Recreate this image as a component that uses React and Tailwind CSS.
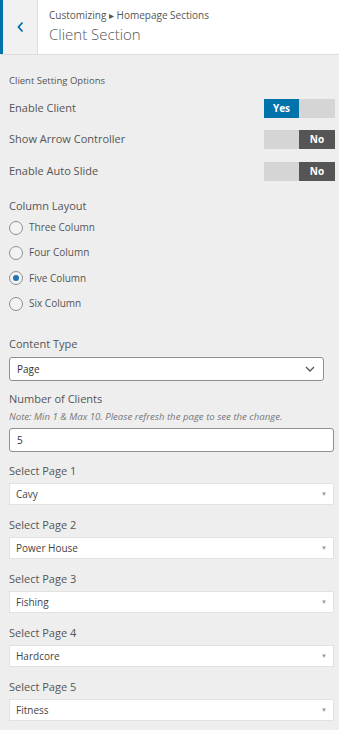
import React from "react";

const font = { fontFamily: '"Open Sans", "Noto Sans", sans-serif' };

function Toggle({ on }) {
  return (
    <div className="flex h-[19px] w-[71px] text-[10px] font-bold text-white">
      <div className={`flex w-[35px] items-center justify-center ${on ? "bg-[#0073aa]" : "bg-[#d5d5d5]"}`}>
        {on ? "Yes" : ""}
      </div>
      <div className={`flex w-[36px] items-center justify-center ${on ? "bg-[#d5d5d5]" : "bg-[#555555]"}`}>
        {on ? "" : "No"}
      </div>
    </div>
  );
}

function Radio({ label, checked }) {
  return (
    <div className="flex h-[25.3px] items-center gap-[6px]">
      <div className="flex h-[14px] w-[14px] items-center justify-center rounded-full border border-[#8c8f94] bg-[#f3f3f3]">
        {checked && <div className="h-[6px] w-[6px] rounded-full bg-[#2271b1]" />}
      </div>
      <span className="text-[10px] text-[#555]">{label}</span>
    </div>
  );
}

function PageSelect({ label, value }) {
  return (
    <div className="flex flex-col">
      <div className="h-[18px] text-[11px] leading-[18px] text-[#555]">{label}</div>
      <div className="mt-[3px] flex h-[22px] w-[325px] items-center justify-between border border-[#e2e2e2] bg-white pl-[6px] pr-[6px]">
        <span className="text-[10px] text-[#444]">{value}</span>
        <span className="text-[6px] text-[#999]">▼</span>
      </div>
    </div>
  );
}

export default function App() {
  return (
    <div className="min-h-[730px] w-[339px] bg-[#eeeeee]" style={font}>
      <div className="flex h-[55px] border-b border-[#dddddd] bg-white">
        <div className="flex w-[38px] items-center justify-center border-l-[3px] border-r border-l-[#0073aa] border-r-[#dddddd] bg-[#f1f1f1]">
          <svg width="9" height="12" viewBox="0 0 9 12" fill="none">
            <path d="M6.5 1.5 L2.5 6 L6.5 10.5" stroke="#0073aa" strokeWidth="1.8" />
          </svg>
        </div>
        <div className="flex flex-col pl-[11px] pt-[8px]">
          <div className="text-[10px] leading-[14px] text-[#555]">Customizing ▸ Homepage Sections</div>
          <div className="mt-[2px] text-[15px] font-light leading-[20px] text-[#555]">Client Section</div>
        </div>
      </div>

      <div className="flex flex-col px-[9px]">
        <div className="mt-[19px] text-[9.5px] leading-[14px] text-[#555]">Client Setting Options</div>

        <div className="mt-[11px] flex h-[19px] items-center justify-between">
          <span className="text-[11px] text-[#555]">Enable Client</span>
          <div className="-mr-[5px]"><Toggle on /></div>
        </div>
        <div className="mt-[12px] flex h-[19px] items-center justify-between">
          <span className="text-[11px] text-[#555]">Show Arrow Controller</span>
          <div className="-mr-[5px]"><Toggle on={false} /></div>
        </div>
        <div className="mt-[13px] flex h-[19px] items-center justify-between">
          <span className="text-[11px] text-[#555]">Enable Auto Slide</span>
          <div className="-mr-[5px]"><Toggle on={false} /></div>
        </div>

        <div className="mt-[16px] text-[11px] leading-[18px] text-[#555]">Column Layout</div>
        <div className="flex flex-col">
          <Radio label="Three Column" />
          <Radio label="Four Column" />
          <Radio label="Five Column" checked />
          <Radio label="Six Column" />
        </div>

        <div className="mt-[19px] text-[11px] leading-[18px] text-[#555]">Content Type</div>
        <div className="mt-[4px] flex h-[24px] w-[315px] items-center justify-between rounded-[3px] border border-[#8c8f94] bg-white pl-[7px] pr-[8px]">
          <span className="text-[10px] text-[#333]">Page</span>
          <svg width="10" height="6" viewBox="0 0 10 6" fill="none">
            <path d="M1 1 L5 5 L9 1" stroke="#555" strokeWidth="1.3" />
          </svg>
        </div>

        <div className="mt-[9px] text-[11px] leading-[18px] text-[#555]">Number of Clients</div>
        <div className="mt-[2px] whitespace-nowrap text-[9.6px] italic leading-[14px] text-[#777]">Note: Min 1 &amp; Max 10. Please refresh the page to see the change.</div>
        <div className="mt-[4px] flex h-[24px] w-[325px] items-center rounded-[3px] border border-[#8c8f94] bg-white pl-[7px]">
          <span className="text-[10px] text-[#333]">5</span>
        </div>

        <div className="mt-[10px] flex flex-col gap-[11px]">
          <PageSelect label="Select Page 1" value="Cavy" />
          <PageSelect label="Select Page 2" value="Power House" />
          <PageSelect label="Select Page 3" value="Fishing" />
          <PageSelect label="Select Page 4" value="Hardcore" />
          <PageSelect label="Select Page 5" value="Fitness" />
        </div>
      </div>
    </div>
  );
}
